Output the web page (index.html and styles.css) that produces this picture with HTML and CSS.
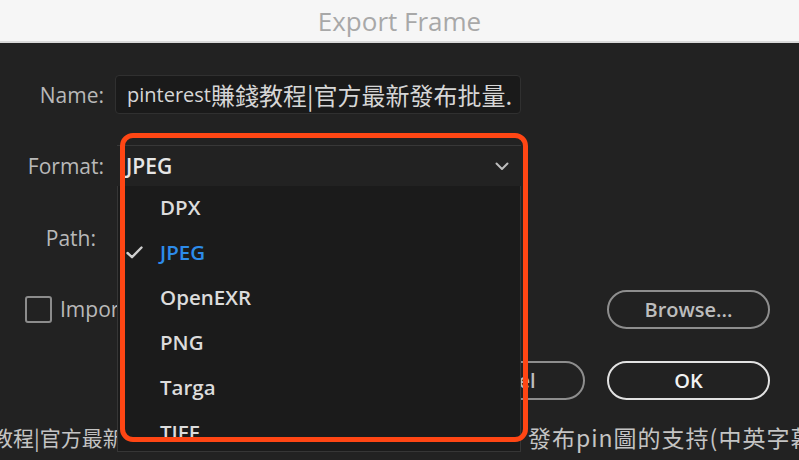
FILE: index.html
```html
<!DOCTYPE html>
<html lang="zh-Hant">
<head>
  <meta charset="UTF-8">
  <title>Export Frame</title>
  <link rel="stylesheet" href="styles.css">
</head>
<body>
  <div class="titlebar">Export Frame</div>

  <div class="dialog">
    <div class="row">
      <label class="label">Name:</label>
      <div class="field name-field">pinterest<span class="cjk">賺錢教程|官方最新發布批量.</span></div>
    </div>

    <div class="row">
      <label class="label">Format:</label>
      <div class="field select">
        <span>JPEG</span>
        <svg class="chevron" width="14" height="9" viewBox="0 0 14 9">
          <path d="M1.5 1.5 L7 7 L12.5 1.5" fill="none" stroke="#bdbdbd" stroke-width="2" stroke-linecap="round" stroke-linejoin="round"/>
        </svg>
      </div>
    </div>

    <div class="row path-row">
      <label class="label">Path:</label>
    </div>

    <div class="row wide">
      <div class="check">
        <span class="box"></span>
        <span>Import into project</span>
      </div>
      <button class="btn">Browse...</button>
    </div>

    <div class="row wide actions">
      <button class="btn">Cancel</button>
      <button class="btn ok">OK</button>
    </div>

    <div class="behind">
      <span class="left-text">教程|官方最新</span>
      <span class="right-text">發布pin圖的支持(中英字幕)</span>
    </div>

    <ul class="menu">
      <li>DPX</li>
      <li class="selected">
        <svg class="tick" width="17" height="13" viewBox="0 0 17 13">
          <path d="M1.5 7 L6 11.2 L15.5 1.5" fill="none" stroke="#cfcfcf" stroke-width="2.4" stroke-linecap="round" stroke-linejoin="round"/>
        </svg>
        JPEG
      </li>
      <li>OpenEXR</li>
      <li>PNG</li>
      <li>Targa</li>
      <li>TIFF</li>
    </ul>

    <div class="highlight"></div>
  </div>
</body>
</html>
```

FILE: styles.css
```css
body {
  margin: 0;
  width: 799px;
  height: 460px;
  overflow: hidden;
  background: #222222;
  font-family: 'Open Sans', 'Noto Sans CJK TC', sans-serif;
}

.titlebar {
  height: 41px;
  background: #f6f6f6;
  border-bottom: 2px solid #d9d9d9;
  display: flex;
  align-items: center;
  justify-content: center;
  color: #a8a8a8;
  font-size: 26px;
  padding-left: 0;
}

.dialog {
  position: relative;
  height: 417px;
  padding-top: 32px;
  box-sizing: border-box;
  display: flex;
  flex-direction: column;
}

.row {
  display: flex;
  align-items: center;
  gap: 11px;
}

.label {
  width: 104px;
  text-align: right;
  color: #b9b9b9;
  font-size: 21px;
}

.field {
  box-sizing: border-box;
  width: 406px;
  color: #d6d6d6;
  font-size: 20px;
}

.name-field {
  height: 39px;
  background: #1a1a1a;
  border: 1px solid #303030;
  border-radius: 4px;
  padding-left: 11px;
  display: flex;
  align-items: center;
  white-space: nowrap;
  overflow: hidden;
}

.cjk {
  font-family: 'Noto Sans CJK TC', sans-serif;
  font-size: 24px;
}

.row + .row {
  margin-top: 31px;
}

.select {
  height: 42px;
  width: 404px;
  margin-left: 2px;
  border-top: 1px solid #383838;
  border-bottom: 1px solid #383838;
  padding: 0 12px 0 9px;
  display: flex;
  align-items: center;
  justify-content: space-between;
  font-weight: 600;
  font-size: 21px;
  color: #e6e6e6;
}

.path-row {
  height: 40px;
}

.path-row .label {
  width: 96px;
}

.wide {
  justify-content: space-between;
  padding: 0 29px 0 25px;
  height: 40px;
}

.check {
  display: flex;
  align-items: center;
  gap: 8px;
  color: #b9b9b9;
  font-size: 21px;
  white-space: nowrap;
}

.box {
  width: 23px;
  height: 23px;
  border: 2px solid #8c8c8c;
  border-radius: 3px;
}

.btn {
  width: 163px;
  height: 39px;
  background: transparent;
  border: 2px solid #8e8e8e;
  border-radius: 20px;
  color: #bdbdbd;
  font-family: 'Open Sans', sans-serif;
  font-size: 20px;
  font-weight: 600;
}

.actions {
  justify-content: flex-end;
  gap: 22px;
  margin-top: 33px;
}

.ok {
  border-color: #e2e2e2;
  color: #f2f2f2;
}

.behind {
  display: flex;
  margin-top: 19px;
  height: 36px;
  align-items: center;
  color: #c4c4c4;
  font-size: 23px;
  font-family: 'Noto Sans CJK TC', sans-serif;
  white-space: nowrap;
  overflow: hidden;
}

.left-text {
  margin-left: -8px;
  width: 536px;
  flex-shrink: 0;
  font-size: 21px;
}

.right-text {
  letter-spacing: 1px;
}

.menu {
  position: absolute;
  left: 117px;
  top: 143px;
  width: 404px;
  height: 266px;
  box-sizing: border-box;
  margin: 0;
  padding: 0;
  list-style: none;
  background: #1b1b1b;
  border: 1px solid #363636;
  border-top: none;
  overflow: hidden;
}

.menu li {
  height: 45px;
  box-sizing: border-box;
  padding-bottom: 4px;
  display: flex;
  align-items: center;
  padding-left: 42px;
  position: relative;
  color: #dcdcdc;
  font-size: 20.5px;
  font-weight: 600;
}

.menu .selected {
  color: #2d8ceb;
}

.tick {
  position: absolute;
  left: 8px;
  top: 15px;
}

.highlight {
  position: absolute;
  left: 120px;
  top: 90px;
  width: 408px;
  height: 309px;
  box-sizing: border-box;
  border: 5px solid #ff4614;
  border-radius: 13px;
}
```
